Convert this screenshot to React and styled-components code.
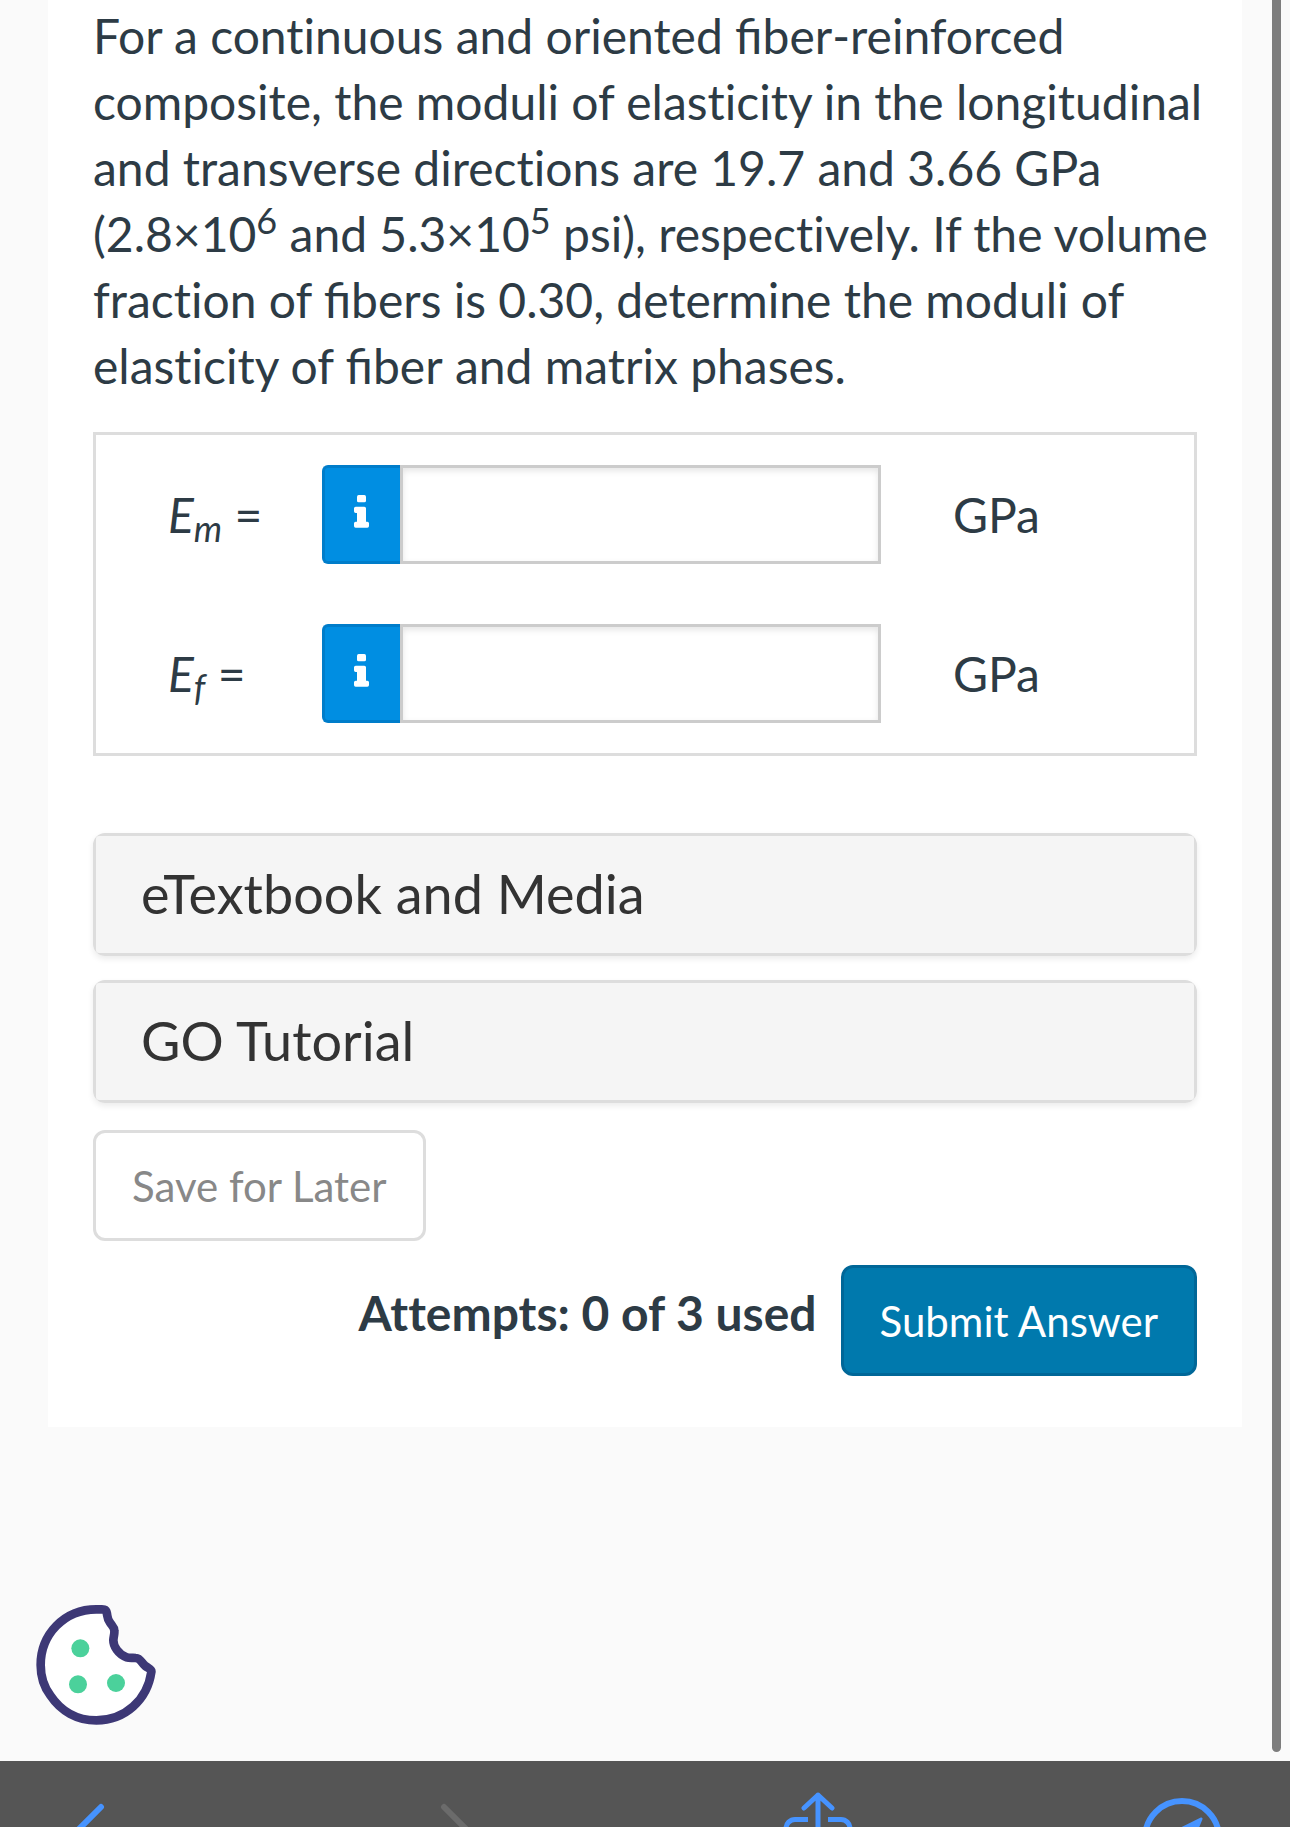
import React, { useState } from "react";
import styled, { createGlobalStyle } from "styled-components";

const GlobalStyle = createGlobalStyle`
  * {
    box-sizing: border-box;
  }

  body {
    margin: 0;
    background-color: #fafafa;
    color: #2d3b45;
    font-family: Lato, "Liberation Sans", sans-serif;
    font-size: 48px;
    font-variant-ligatures: none;
    line-height: 66px;
  }

  button,
  input {
    font-family: inherit;
    font-variant-ligatures: inherit;
  }
`;

const Page = styled.div`
  display: flex;
  flex-direction: column;
  min-height: 100vh;
`;

const Content = styled.main`
  flex: 1;
  padding: 0 48px 100px;
`;

const Card = styled.section`
  padding: 3px 45px 51px;
  background-color: #ffffff;
`;

const Question = styled.p`
  margin: 0 -21px 33px 0;
`;

const Ligature = styled.span`
  font-variant-ligatures: normal;
`;

const Sup = styled.sup`
  font-size: 36px;
  line-height: 0;
  vertical-align: 18px;
`;

const Sub = styled.sub`
  font-size: 36px;
  line-height: 0;
  vertical-align: -9px;
`;

const AnswerBox = styled.div`
  display: flex;
  flex-direction: column;
  gap: 60px;
  margin-bottom: 77px;
  padding: 30px 0 30px 72px;
  border: 3px solid #dddddd;
`;

const AnswerRow = styled.div`
  display: grid;
  grid-template-columns: 154px minmax(0, 1fr) 313px;
  align-items: center;
`;

const Unit = styled.span`
  padding-left: 72px;
`;

const InputGroup = styled.div`
  display: flex;
  height: 99px;
`;

const InfoButton = styled.button`
  display: flex;
  align-items: center;
  justify-content: center;
  width: 78px;
  padding: 0 3px 6px 0;
  border: 3px solid #007dca;
  border-right: 0;
  border-radius: 6px 0 0 6px;
  background-color: #008ee2;
`;

const AnswerInput = styled.input`
  flex: 1;
  min-width: 0;
  padding: 0 18px;
  border: 3px solid #cccccc;
  border-radius: 0;
  background-color: #ffffff;
  box-shadow: inset 0 3px 6px rgba(0, 0, 0, 0.1);
  color: #2d3b45;
  font-size: 42px;
`;

const Resources = styled.div`
  display: flex;
  flex-direction: column;
  gap: 24px;
  margin-bottom: 27px;
`;

const ResourcePanel = styled.div`
  display: flex;
  border: 3px solid #dddddd;
  border-radius: 12px;
  box-shadow: 0 3px 6px rgba(0, 0, 0, 0.08);
`;

const ResourceButton = styled.button`
  flex: 1;
  height: 117px;
  padding: 0 45px 3px;
  border: 0;
  border-radius: 3px;
  background-color: #f5f5f5;
  color: #333333;
  font-size: 54px;
  text-align: left;
`;

const ActionButton = styled.button`
  height: 111px;
  padding: 0 36px;
  border: 3px solid ${(props) => (props.$primary ? "#006798" : "#dddddd")};
  border-radius: 12px;
  background-color: ${(props) => (props.$primary ? "#0079ad" : "#ffffff")};
  color: ${(props) => (props.$primary ? "#ffffff" : "#888888")};
  font-size: 42px;
  white-space: nowrap;
`;

const SaveRow = styled.div`
  display: flex;
  margin-bottom: 24px;
`;

const SubmitRow = styled.div`
  display: flex;
  justify-content: flex-end;
  align-items: flex-start;
  gap: 24px;
`;

const Attempts = styled.strong`
  padding-top: 15px;
  font-weight: 700;
`;

const CookieButton = styled.button`
  position: fixed;
  left: 36px;
  bottom: 102px;
  width: 120px;
  height: 120px;
  padding: 0;
  border: 0;
  background: none;

  svg {
    display: block;
  }
`;

const ScrollThumb = styled.div`
  position: fixed;
  top: 0;
  right: 9px;
  bottom: 75px;
  width: 9px;
  border-radius: 0 0 5px 5px;
  background-color: #7d7d7d;
`;

const Toolbar = styled.nav`
  display: flex;
  justify-content: space-between;
  height: 66px;
  padding: 0 57px 0 38px;
  overflow: hidden;
  background-color: #555555;
`;

const ToolbarButton = styled.button`
  width: 100px;
  height: 100px;
  padding: 0;
  border: 0;
  background: none;
  color: ${(props) => (props.disabled ? "#6b6b6b" : "#4693ff")};

  svg {
    display: block;
  }
`;

const InfoIcon = () => (
  <svg width="15" height="33" viewBox="0 0 45 99" fill="#fff" aria-hidden="true">
    <rect x="9" y="0" width="27" height="22" rx="5" />
    <path d="M5 35H31a5 5 0 0 1 5 5V80H40a5 5 0 0 1 5 5V93a5 5 0 0 1-5 5H5a5 5 0 0 1-5-5V85a5 5 0 0 1 5-5H9V54H5a5 5 0 0 1-5-5V40a5 5 0 0 1 5-5Z" />
  </svg>
);

const CookieIcon = () => (
  <svg width="120" height="120" viewBox="48 45 360 360" aria-hidden="true">
    <path
      d="M229 58C132 58 62 134 62 225C62 260 72 291 91 316C123 364 172 391 229 391C316 391 382 329 394 246C396 237 385 235 376 228C363 218 363 205 347 204C336 203 329 205 320 202C294 193 280 168 280 151C281 137 284 132 283 122C283 111 276 107 270 98C261 86 263 79 260 67C258 56 248 58 229 58Z"
      fill="#fff"
      stroke="#3d3876"
      strokeWidth="26"
      strokeLinejoin="round"
    />
    <circle cx="181" cy="175" r="27" fill="#4bd19b" />
    <circle cx="174" cy="283" r="27" fill="#4bd19b" />
    <circle cx="288" cy="279" r="27" fill="#4bd19b" />
  </svg>
);

const ToolbarIcon = ({ children }) => (
  <svg
    width="100"
    height="100"
    viewBox="0 0 100 100"
    fill="none"
    stroke="currentColor"
    strokeWidth="6"
    strokeLinecap="round"
    strokeLinejoin="round"
    aria-hidden="true"
  >
    {children}
  </svg>
);

const answers = [
  { id: "matrix", symbol: "m", unit: "GPa" },
  { id: "fiber", symbol: "f", unit: "GPa" },
];

const resources = ["eTextbook and Media", "GO Tutorial"];

const App = () => {
  const [values, setValues] = useState({ matrix: "", fiber: "" });

  const answerRows = answers.map((answer) => (
    <AnswerRow key={answer.id}>
      <label htmlFor={answer.id}>
        <i>
          E<Sub>{answer.symbol}</Sub>
        </i>{" "}
        =
      </label>
      <InputGroup>
        <InfoButton type="button" aria-label="Info">
          <InfoIcon />
        </InfoButton>
        <AnswerInput
          id={answer.id}
          type="text"
          value={values[answer.id]}
          onChange={(e) => setValues({ ...values, [answer.id]: e.target.value })}
        />
      </InputGroup>
      <Unit>{answer.unit}</Unit>
    </AnswerRow>
  ));

  return (
    <Page>
      <GlobalStyle />
      <Content>
        <Card>
          <Question>
            For a continuous and oriented <Ligature>fiber</Ligature>-reinforced
            composite, the moduli of elasticity in the longitudinal and
            transverse directions are 19.7 and 3.66 GPa (2.8×10<Sup>6</Sup> and
            5.3×10<Sup>5</Sup> psi), respectively. If the volume fraction of{" "}
            <Ligature>fibers</Ligature> is 0.30, determine the moduli of
            elasticity of <Ligature>fiber</Ligature> and matrix phases.
          </Question>
          <AnswerBox>{answerRows}</AnswerBox>
          <Resources>
            {resources.map((title) => (
              <ResourcePanel key={title}>
                <ResourceButton type="button">{title}</ResourceButton>
              </ResourcePanel>
            ))}
          </Resources>
          <SaveRow>
            <ActionButton type="button">Save for Later</ActionButton>
          </SaveRow>
          <SubmitRow>
            <Attempts>Attempts: 0 of 3 used</Attempts>
            <ActionButton type="submit" $primary>
              Submit Answer
            </ActionButton>
          </SubmitRow>
        </Card>
      </Content>
      <Toolbar>
        <ToolbarButton type="button" aria-label="Back">
          <ToolbarIcon>
            <path d="M63 46L34 75L63 104" />
          </ToolbarIcon>
        </ToolbarButton>
        <ToolbarButton type="button" aria-label="Forward" disabled>
          <ToolbarIcon>
            <path d="M41 46L70 75L41 104" />
          </ToolbarIcon>
        </ToolbarButton>
        <ToolbarButton type="button" aria-label="Share">
          <ToolbarIcon>
            <path d="M36 47L50 34L64 47M50 34V80" strokeWidth="5" />
            <path
              d="M40 58.5H27a9 9 0 0 0-9 9V98M60 58.5H73a9 9 0 0 1 9 9V98"
              strokeWidth="5"
              strokeLinecap="butt"
            />
          </ToolbarIcon>
        </ToolbarButton>
        <ToolbarButton type="button" aria-label="Open in browser">
          <ToolbarIcon>
            <circle cx="49" cy="77" r="37" />
            <path
              d="M68 58L40 72L30 96L58 82Z"
              fill="currentColor"
              strokeWidth="3"
            />
          </ToolbarIcon>
        </ToolbarButton>
      </Toolbar>
      <CookieButton type="button" aria-label="Cookie preferences">
        <CookieIcon />
      </CookieButton>
      <ScrollThumb />
    </Page>
  );
};

export default App;
